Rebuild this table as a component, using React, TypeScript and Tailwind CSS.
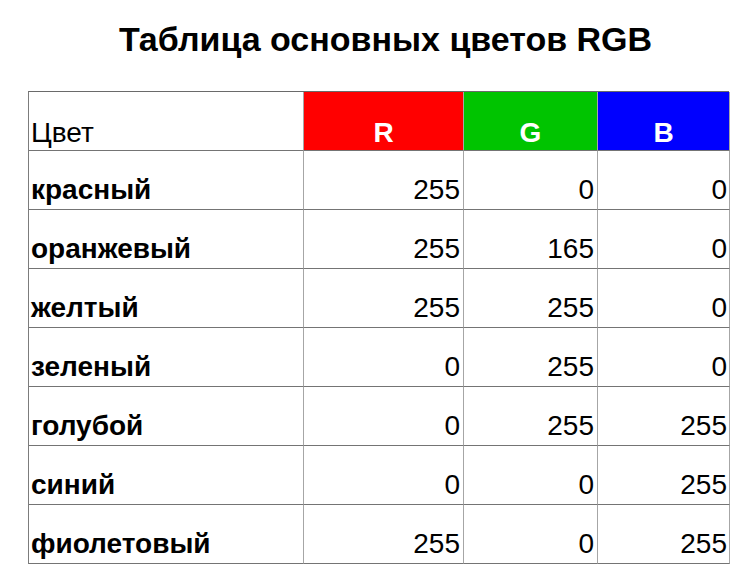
import React from "react";

const rows: [string, string, string, string][] = [
  ["красный", "255", "0", "0"],
  ["оранжевый", "255", "165", "0"],
  ["желтый", "255", "255", "0"],
  ["зеленый", "0", "255", "0"],
  ["голубой", "0", "255", "255"],
  ["синий", "0", "0", "255"],
  ["фиолетовый", "255", "0", "255"],
];

const cell =
  "h-[59px] flex items-end border-b border-r border-b-[#747474] border-r-[#a6a6a6]";

export default function App() {
  return (
    <div
      className="w-[749px] h-[575px] bg-white text-black overflow-hidden"
      style={{ fontFamily: '"Liberation Sans", Arial, sans-serif' }}
    >
      <div className="h-[91px] pt-[19px] pl-[22px] text-center text-[34px] leading-[40px] font-bold">
        Таблица основных цветов RGB
      </div>
      <div className="ml-[28px] w-[701px] grid grid-cols-[275px_160px_134px_132px] border-l border-t border-l-[#7c7c7c] border-t-[#6a6a6a] text-[28px] leading-[32px]">
        <div className={`${cell} pl-[2px] pb-[1px]`}>Цвет</div>
        <div className={`${cell} justify-center pb-[1px] bg-[#ff0000] text-white font-bold`}>R</div>
        <div className={`${cell} justify-center pb-[1px] bg-[#00c400] text-white font-bold`}>G</div>
        <div className={`${cell} justify-center pb-[1px] bg-[#0000ff] text-white font-bold`}>B</div>
        {rows.map(([name, r, g, b]) => (
          <React.Fragment key={name}>
            <div className={`${cell} pl-[2px] pb-[3px] font-bold`}>{name}</div>
            <div className={`${cell} justify-end pr-[3px] pb-[3px]`}>{r}</div>
            <div className={`${cell} justify-end pr-[3px] pb-[3px]`}>{g}</div>
            <div className={`${cell} justify-end pr-[2px] pb-[3px]`}>{b}</div>
          </React.Fragment>
        ))}
      </div>
    </div>
  );
}
